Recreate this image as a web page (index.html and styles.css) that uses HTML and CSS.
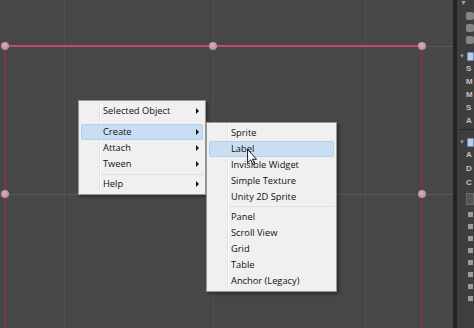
FILE: index.html
```html
<!DOCTYPE html>
<html lang="en">
<head>
    <meta charset="UTF-8">
    <meta name="viewport" content="width=device-width, initial-scale=1.0">
    <title>Scene - Create menu</title>
    <link rel="stylesheet" href="styles.css">
</head>
<body>

    <!-- Scene view -->
    <div class="scene">
        <div class="grid-v gv1"></div>
        <div class="grid-v gv2"></div>
        <div class="grid-v gv3"></div>
        <div class="grid-v gv4"></div>
        <div class="grid-h gh1"></div>
        <div class="grid-h gh2"></div>

        <!-- widget bounds -->
        <div class="frame"></div>
        <div class="handle h-tl"></div>
        <div class="handle h-tc"></div>
        <div class="handle h-tr"></div>
        <div class="handle h-ml"></div>
        <div class="handle h-mr"></div>

        <!-- context menu -->
        <div class="menu main-menu">
            <div class="item sub">Selected Object</div>
            <div class="gap"></div>
            <div class="item sub active">Create</div>
            <div class="item sub">Attach</div>
            <div class="item sub">Tween</div>
            <div class="sep"></div>
            <div class="item sub">Help</div>
        </div>

        <div class="menu sub-menu">
            <div class="item">Sprite</div>
            <div class="item active">Label</div>
            <div class="item">Invisible Widget</div>
            <div class="item">Simple Texture</div>
            <div class="item">Unity 2D Sprite</div>
            <div class="sep"></div>
            <div class="item">Panel</div>
            <div class="item">Scroll View</div>
            <div class="item">Grid</div>
            <div class="item">Table</div>
            <div class="item">Anchor (Legacy)</div>
        </div>

        <svg class="cursor" width="11" height="17" viewBox="0 0 12 19">
            <path d="M0.5 0.5 V15.5 L4 12 L6.5 17.5 L8.5 16.5 L6 11.5 H10.5 Z" fill="#fff" stroke="#000" stroke-width="1"/>
        </svg>
    </div>

    <div class="divider"></div>

    <!-- Inspector (only its first column shows) -->
    <div class="inspector">
        <div class="insp-top">&#9660;</div>
        <div class="insp-btn"></div>
        <div class="insp-btn"></div>
        <div class="insp-btn"></div>
        <div class="insp-head"><span class="tri">&#9660;</span><span class="check"></span></div>
        <div class="insp-row">S</div>
        <div class="insp-row">M</div>
        <div class="insp-row">M</div>
        <div class="insp-row">S</div>
        <div class="insp-row">A</div>
        <div class="insp-line"></div>
        <div class="insp-head"><span class="tri">&#9660;</span><span class="check"></span></div>
        <div class="insp-row tall">A</div>
        <div class="insp-row tall">D</div>
        <div class="insp-row tall">C</div>
        <div class="insp-box"></div>
        <div class="insp-mark"></div>
        <div class="insp-mark"></div>
        <div class="insp-mark"></div>
        <div class="insp-mark"></div>
        <div class="insp-mark"></div>
        <div class="insp-mark"></div>
        <div class="insp-mark"></div>
        <div class="insp-mark"></div>
    </div>

</body>
</html>
```

FILE: styles.css
```css
/* Estilos gerais */
body {
    display: flex;
    width: 474px;
    height: 328px;
    margin: 0;
    overflow: hidden;
    background-color: #474747;
    font-family: "Open Sans", Arial, sans-serif;
}

/* Scene view */
.scene {
    position: relative;
    flex: 1;
    background-color: #474747;
    overflow: hidden;
}

.grid-v {
    position: absolute;
    top: 0;
    bottom: 0;
    width: 1px;
    background-color: #4f4f4f;
}

.gv1 { left: 64px; }
.gv2 { left: 70px; background-color: #4b4b4b; }
.gv3 { left: 213px; }
.gv4 { left: 365px; }

.grid-h {
    position: absolute;
    left: 0;
    right: 0;
    height: 1px;
    background-color: #585858;
}

.gh1 { top: 46px; }
.gh2 { top: 194px; }

.frame {
    position: absolute;
    left: 4px;
    top: 45px;
    width: 419px;
    height: 320px;
    box-sizing: border-box;
    border-top: 2px solid #c2457b;
    border-left: 2px solid #74384f;
    border-right: 2px solid #74384f;
}

.handle {
    position: absolute;
    width: 8px;
    height: 8px;
    margin: -4px 0 0 -4px;
    border-radius: 50%;
    background: radial-gradient(circle at 45% 40%, #d8b0be, #ad7d8f);
}

.h-tl { left: 5px; top: 46px; }
.h-tc { left: 213px; top: 46px; }
.h-tr { left: 422px; top: 46px; }
.h-ml { left: 5px; top: 194px; }
.h-mr { left: 422px; top: 194px; }

/* Menus */
.menu {
    position: absolute;
    box-sizing: border-box;
    padding: 2px 0;
    border: 1px solid #979797;
    background: linear-gradient(to right, #f0f0f0 0, #f0f0f0 20px, #e2e3e3 20px, #e2e3e3 21px, #ffffff 21px, #ffffff 22px, #f0f0f0 22px);
    box-shadow: 2px 2px 3px rgba(0, 0, 0, 0.35);
    font-size: 9.3px;
    color: #111;
}

.main-menu {
    left: 78px;
    top: 100px;
    width: 128px;
}

.sub-menu {
    left: 206px;
    top: 122px;
    width: 131px;
}

.item {
    position: relative;
    box-sizing: border-box;
    height: 16px;
    line-height: 14px;
    margin: 0 2px;
    padding-left: 21px;
    border: 1px solid transparent;
    border-radius: 2px;
    white-space: nowrap;
}

.item.active {
    background-color: #cadef3;
    border-color: #b3cfee;
}

.item.sub::after {
    content: "";
    position: absolute;
    right: 3px;
    top: 4px;
    border-left: 3px solid #111;
    border-top: 3px solid transparent;
    border-bottom: 3px solid transparent;
}

.gap {
    height: 5px;
}

.sep {
    height: 1px;
    margin: 2px 2px 1px 22px;
    background-color: #e0e0e0;
}

.sub-menu .sep {
    margin: 1px 2px 2px 22px;
}

.cursor {
    position: absolute;
    left: 247px;
    top: 149px;
}

/* Inspector */
.divider {
    width: 4px;
    background-color: #232323;
}

.inspector {
    width: 15px;
    padding-left: 2px;
    background-color: #3e3e3e;
    overflow: hidden;
    font-family: "Liberation Sans", Arial, sans-serif;
    font-size: 8px;
    font-weight: bold;
    color: #c4c4c4;
    white-space: nowrap;
}

.insp-top {
    height: 9px;
    line-height: 6px;
    font-size: 7px;
    color: #8aa6c4;
    padding-left: 1px;
}

.insp-btn {
    height: 8px;
    margin: 3px 0 4px 7px;
    border-radius: 2px;
    background-color: #858585;
}

.insp-head {
    display: flex;
    align-items: center;
    gap: 2px;
    height: 12px;
    margin-top: 6px;
}

.tri {
    font-size: 6px;
    color: #9a9a9a;
}

.check {
    width: 7px;
    height: 7px;
    border-radius: 1px;
    background-color: #b8cde2;
    border: 1px solid #6a8fb8;
}

.insp-row {
    height: 13px;
    line-height: 13px;
    padding-left: 7px;
}

.insp-row.tall {
    height: 14px;
    line-height: 14px;
}

.insp-line {
    height: 1px;
    margin-top: 2px;
    background-color: #2a2a2a;
}

.insp-box {
    height: 10px;
    margin: 3px 0 2px 7px;
    border: 1px solid #6a6a6a;
    background-color: #555;
}

.insp-mark {
    width: 5px;
    height: 5px;
    margin: 7px 0 4px 9px;
    background-color: #9c9c9c;
}
```
